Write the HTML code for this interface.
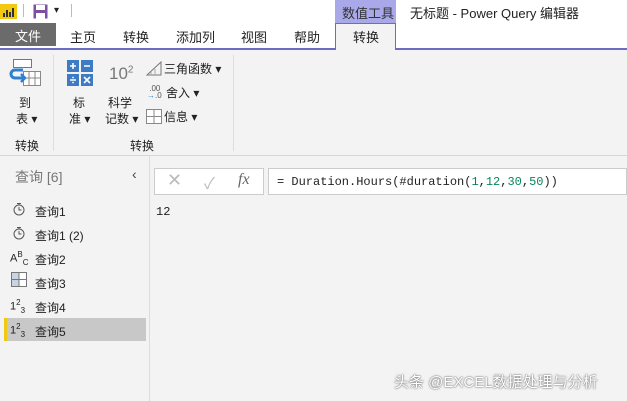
<!DOCTYPE html>
<html><head><meta charset="utf-8"><style>
*{margin:0;padding:0;box-sizing:border-box}
body{width:627px;height:401px;overflow:hidden;background:#f3f3f3;font-family:"Liberation Sans","Noto Sans CJK SC",sans-serif;font-size:12px;color:#222;position:relative}
.a{position:absolute;white-space:nowrap}
.mono{font-family:"Liberation Mono","Noto Sans CJK SC",monospace}
</style></head><body>
<div class="a" style="left:0;top:0;width:627px;height:23px;background:#fff"></div>
<div class="a" style="left:0;top:23px;width:627px;height:26px;background:#fff"></div>
<div class="a" style="left:0;top:4px;width:17px;height:15px;background:#f2c811"></div>
<svg class="a" style="left:2px;top:7px" width="13" height="10"><rect x="1" y="6" width="2" height="4" fill="#333"/><rect x="4" y="3" width="2" height="7" fill="#333"/><rect x="7" y="5" width="2" height="5" fill="#333"/><rect x="10" y="1" width="2" height="9" fill="#333"/></svg>
<div class="a" style="left:23px;top:4px;width:1px;height:13px;background:#bbb"></div>
<svg class="a" style="left:33px;top:4px" width="15" height="15"><rect x="0.5" y="0.5" width="14" height="14" fill="#7b4fa3"/><rect x="3" y="1" width="9" height="5" fill="#fff"/><rect x="3" y="9" width="9" height="6" fill="#fff"/></svg>
<div class="a" style="left:54px;top:5px;font-size:10px">▾</div>
<div class="a" style="left:71px;top:4px;width:1px;height:13px;background:#bbb"></div>
<div class="a" style="left:335px;top:0;width:61px;height:23px;background:#a9a9ea"></div>
<div class="a" style="left:342px;top:3px;font-size:13px;color:#333">数值工具</div>
<div class="a" style="left:410px;top:3px;font-size:13px;color:#222">无标题 - Power Query 编辑器</div>
<div class="a" style="left:0;top:23px;width:56px;height:23px;background:#6b6b6b;color:#fff;font-size:13px;padding:3px 0 0 15px">文件</div>
<div class="a" style="left:70px;top:27px;font-size:13px">主页</div>
<div class="a" style="left:123px;top:27px;font-size:13px">转换</div>
<div class="a" style="left:176px;top:27px;font-size:13px">添加列</div>
<div class="a" style="left:241px;top:27px;font-size:13px">视图</div>
<div class="a" style="left:294px;top:27px;font-size:13px">帮助</div>
<div class="a" style="left:0;top:48px;width:627px;height:2px;background:#6c6cc4"></div>
<div class="a" style="left:335px;top:23px;width:61px;height:27px;background:#f3f3f3;border:1px solid #6c6cc4;border-bottom:none;font-size:13px;padding:3px 0 0 17px">转换</div>
<div class="a" style="left:0;top:155px;width:627px;height:1px;background:#d6d6d6"></div>
<div class="a" style="left:53px;top:55px;width:1px;height:96px;background:#ddd"></div>
<div class="a" style="left:233px;top:55px;width:1px;height:96px;background:#ddd"></div>
<svg class="a" style="left:9px;top:58px" width="34" height="32"><rect x="4.5" y="1.5" width="18" height="8" fill="#fff" stroke="#777"/><rect x="14.5" y="13.5" width="17" height="14" fill="#fff" stroke="#888"/><path d="M15 20h16M20 14v14M26 14v14" stroke="#888"/><path d="M14 12H6a4 4 0 0 0 0 8h8" fill="none" stroke="#2e7fd0" stroke-width="3"/><path d="M12 16l4 4-4 4" fill="none" stroke="#2e7fd0" stroke-width="2.5"/></svg>
<div class="a" style="left:19px;top:94px;font-size:12px">到</div>
<div class="a" style="left:16px;top:110px;font-size:12px">表 ▾</div>
<div class="a" style="left:15px;top:137px;font-size:12px">转换</div>
<svg class="a" style="left:67px;top:60px" width="26" height="26"><rect width="12" height="12" fill="#3d7bc4"/><rect x="14" width="12" height="12" fill="#3d7bc4"/><rect y="14" width="12" height="12" fill="#3d7bc4"/><rect x="14" y="14" width="12" height="12" fill="#3d7bc4"/><path d="M3 6h6M6 3v6M17 6h6M3 20h6M17 17l6 6M23 17l-6 6" stroke="#fff" stroke-width="1.6"/><circle cx="6" cy="17.5" r=".9" fill="#fff"/><circle cx="6" cy="22.5" r=".9" fill="#fff"/></svg>
<div class="a" style="left:73px;top:94px">标</div>
<div class="a" style="left:69px;top:110px">准 ▾</div>
<div class="a" style="left:109px;top:64px;font-size:17px;color:#777">10<sup style="font-size:10px">2</sup></div>
<div class="a" style="left:108px;top:94px">科学</div>
<div class="a" style="left:105px;top:110px">记数 ▾</div>
<svg class="a" style="left:146px;top:61px" width="16" height="15"><path d="M1 14L15 1V14Z" fill="none" stroke="#777"/><path d="M5 14v-3M9 14V8" stroke="#aaa"/></svg>
<div class="a" style="left:164px;top:60px">三角函数 ▾</div>
<div class="a" style="left:147px;top:85px;font-size:8px;color:#555;line-height:7px">&nbsp;.00<br><span style="color:#2e7fd0">→</span>.0</div>
<div class="a" style="left:166px;top:84px">舍入 ▾</div>
<svg class="a" style="left:146px;top:109px" width="16" height="15"><rect x=".5" y=".5" width="15" height="14" fill="#fff" stroke="#888"/><path d="M8 1v14M1 7.5h15" stroke="#888"/></svg>
<div class="a" style="left:164px;top:108px">信息 ▾</div>
<div class="a" style="left:130px;top:137px">转换</div>
<div class="a" style="left:149px;top:156px;width:1px;height:245px;background:#dcdcdc"></div>
<div class="a" style="left:15px;top:167px;font-size:14px;color:#777">查询 [6]</div>
<div class="a" style="left:132px;top:166px;font-size:14px;color:#444">‹</div>
<div class="a" style="left:4px;top:318px;width:142px;height:23px;background:#c8c8c8"></div>
<div class="a" style="left:4px;top:318px;width:3px;height:23px;background:#f2c811"></div>
<svg class="a" style="left:13px;top:202px" width="12" height="14"><circle cx="6" cy="8" r="5" fill="none" stroke="#555"/><path d="M4 1.5h4M6 2v1.5M6 5v3h2.5" fill="none" stroke="#555"/></svg>
<div class="a" style="left:35px;top:203px">查询1</div>
<svg class="a" style="left:13px;top:226px" width="12" height="14"><circle cx="6" cy="8" r="5" fill="none" stroke="#555"/><path d="M4 1.5h4M6 2v1.5M6 5v3h2.5" fill="none" stroke="#555"/></svg>
<div class="a" style="left:35px;top:227px">查询1 (2)</div>
<div class="a" style="left:10px;top:250px;font-size:11px">A<sup style="font-size:8px">B</sup><sub style="font-size:8px">C</sub></div>
<div class="a" style="left:35px;top:251px">查询2</div>
<svg class="a" style="left:11px;top:272px" width="16" height="15"><rect x=".5" y=".5" width="15" height="14" fill="#fff" stroke="#777"/><rect x="1" y="1" width="7" height="13" fill="#c8d3e4"/><path d="M8 1v14M1 7.5h15" stroke="#777"/></svg>
<div class="a" style="left:35px;top:275px">查询3</div>
<div class="a" style="left:10px;top:298px;font-size:11px">1<sup style="font-size:8px">2</sup><sub style="font-size:8px">3</sub></div>
<div class="a" style="left:35px;top:299px">查询4</div>
<div class="a" style="left:10px;top:322px;font-size:11px">1<sup style="font-size:8px">2</sup><sub style="font-size:8px">3</sub></div>
<div class="a" style="left:35px;top:323px">查询5</div>
<div class="a" style="left:154px;top:168px;width:110px;height:27px;background:#fff;border:1px solid #ccc"></div>
<div class="a" style="left:167px;top:170px;font-size:18px;color:#bbb">✕</div>
<div class="a" style="left:204px;top:170px;font-size:16px;color:#bbb">✓</div>
<div class="a" style="left:238px;top:171px;font-size:16px;font-style:italic;font-family:'Liberation Serif',serif;color:#666">fx</div>
<div class="a" style="left:268px;top:168px;width:359px;height:27px;background:#fff;border:1px solid #ccc"></div>
<div class="a mono" style="left:277px;top:175px;font-size:12px">= Duration.Hours(#duration(<span style="color:#098658">1</span>,<span style="color:#098658">12</span>,<span style="color:#098658">30</span>,<span style="color:#098658">50</span>))</div>
<div class="a mono" style="left:156px;top:205px;font-size:12px">12</div>
<div class="a" style="left:394px;top:371px;font-size:15px;color:#fff;text-shadow:0 0 2px #777,0 0 1px #555">头条 @EXCEL数据处理与分析</div>
</body></html>
